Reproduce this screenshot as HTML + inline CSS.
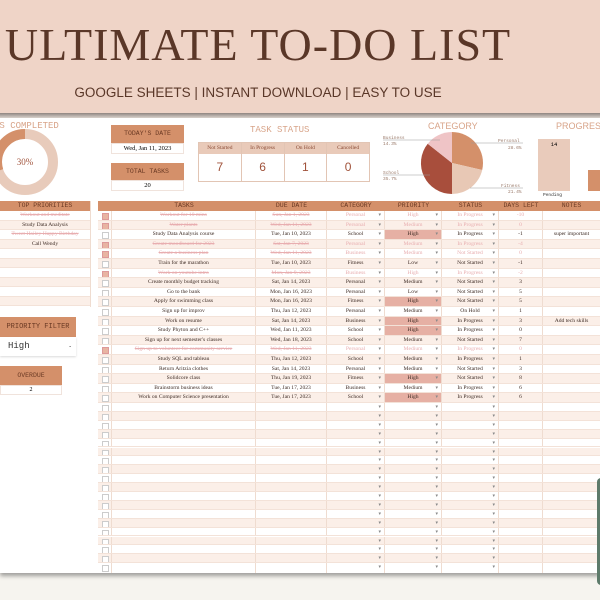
<!DOCTYPE html>
<html><head><meta charset="utf-8"><style>
*{margin:0;padding:0;box-sizing:border-box}
body{width:600px;height:600px;overflow:hidden;background:#f6f4ef;position:relative;font-family:"Liberation Serif",serif}
.hdr{position:absolute;left:0;top:0;width:600px;height:115px;background:#efd4c7}
.title{position:absolute;left:-42px;width:600px;top:17px;text-align:center;font-size:46px;color:#5a3728;letter-spacing:1px;font-family:"Liberation Serif",serif;line-height:56px}
.sub{position:absolute;left:-42px;width:600px;top:85px;text-align:center;font-family:"Liberation Sans",sans-serif;font-size:13.5px;color:#5a3728}
.shadow{position:absolute;left:0;top:113px;width:600px;height:5px;background:linear-gradient(#8f8580,#d9d2cc)}
.sheet{position:absolute;left:0;top:117px;width:600px;height:456px;background:#fff;box-shadow:0 3px 4px rgba(0,0,0,.35)}
.ab{position:absolute}
.mono{font-family:"Liberation Mono",monospace}
.ttl{color:#d8a489;font-size:9px}
.hb{background:#d4906a;color:#6b3a24;font-family:"Liberation Mono",monospace;font-size:6.5px;text-align:center}
.r{position:absolute;left:98px;width:502px;height:9.6px;display:flex;font-size:5.6px;color:#3e2c25;line-height:9px;border-bottom:1px solid #f3e2d8}
.r.e{height:8.9px}
.r.a{background:#fbefe8}
.r span{display:block;height:100%;text-align:center;border-right:1px solid #efdcd0;white-space:nowrap;overflow:hidden;position:relative}
.r span:nth-child(1){width:14px}.r span:nth-child(2){width:144px}.r span:nth-child(3){width:71px}.r span:nth-child(4){width:58px}.r span:nth-child(5){width:57px}.r span:nth-child(6){width:57px}.r span:nth-child(7){width:44px}.r span:nth-child(8){width:57px;border:0}
.r span:nth-child(1)::before{content:"";position:absolute;left:4px;top:2px;width:5px;height:5px;border:1px solid #ccc;background:#fff}
.r.d span:nth-child(1)::before{background:#e8b4a2;border-color:#d99}
.r.d span{color:#e8aeb0;text-decoration:line-through}
.r.d span:nth-child(7),.r.d span:nth-child(4),.r.d span:nth-child(5),.r.d span:nth-child(6){text-decoration:none}
.r span.dd::after{content:"▾";position:absolute;right:3px;top:0;color:#888;font-size:5px;text-decoration:none}
.r span.h{background:#e6b0a4}
.lr{position:absolute;left:0;width:90px;font-size:5.6px;text-align:center;color:#3e2c25;line-height:9.5px;height:9.5px;border-bottom:1px solid #f3e2d8}
.lr.a{background:#fbefe8}
.lr.d{color:#e8aeb0;text-decoration:line-through}
</style></head><body>
<div class="hdr"></div>
<div class="title">ULTIMATE TO-DO LIST</div>
<div class="sub">GOOGLE SHEETS | INSTANT DOWNLOAD | EASY TO USE</div>
<div class="sheet"></div>
<div class="shadow"></div>

<div class="ab mono ttl" style="left:-6px;top:121px">KS COMPLETED</div>
<svg class="ab" style="left:0;top:125px" width="70" height="75">
<circle cx="25" cy="37" r="28" fill="none" stroke="#e8cbbb" stroke-width="10"/>
<circle cx="25" cy="37" r="28" fill="none" stroke="#d4906a" stroke-width="10" stroke-dasharray="52.8 200" transform="rotate(-90 25 37) scale(1 -1) translate(0 -74)"/>
<text x="25" y="40" text-anchor="middle" font-size="9" fill="#a0523a" font-family="Liberation Serif">30%</text>
</svg>

<div class="ab hb" style="left:111px;top:125px;width:73px;height:18px;line-height:18px">TODAY'S DATE</div>
<div class="ab" style="left:111px;top:143px;width:73px;height:11px;font-size:6.5px;text-align:center;line-height:10px;border:1px solid #f0e3dc">Wed, Jan 11, 2023</div>
<div class="ab hb" style="left:111px;top:163px;width:73px;height:17px;line-height:17px">TOTAL TASKS</div>
<div class="ab" style="left:111px;top:180px;width:73px;height:11px;font-size:6.5px;text-align:center;line-height:10px;border:1px solid #f0e3dc">20</div>

<div class="ab mono ttl" style="left:250px;top:125px">TASK STATUS</div>
<div class="ab" style="left:198px;top:142px;width:172px;height:40px;border:1px solid #e2c5b4;display:flex">
<div style="flex:1;border-right:1px solid #e2c5b4;text-align:center"><div style="background:#e9cab9;font-size:5.5px;line-height:11px;color:#8a4a34">Not Started</div><div style="font-family:'Liberation Sans';font-size:12px;color:#a0523a;line-height:27px">7</div></div>
<div style="flex:1;border-right:1px solid #e2c5b4;text-align:center"><div style="background:#e9cab9;font-size:5.5px;line-height:11px;color:#8a4a34">In Progress</div><div style="font-family:'Liberation Sans';font-size:12px;color:#a0523a;line-height:27px">6</div></div>
<div style="flex:1;border-right:1px solid #e2c5b4;text-align:center"><div style="background:#e9cab9;font-size:5.5px;line-height:11px;color:#8a4a34">On Hold</div><div style="font-family:'Liberation Sans';font-size:12px;color:#a0523a;line-height:27px">1</div></div>
<div style="flex:1;text-align:center"><div style="background:#e9cab9;font-size:5.5px;line-height:11px;color:#8a4a34">Cancelled</div><div style="font-family:'Liberation Sans';font-size:12px;color:#a0523a;line-height:27px">0</div></div>
</div>

<div class="ab ttl" style="left:428px;top:121px;font-family:'Liberation Sans';font-size:9px">CATEGORY</div>
<svg class="ab" style="left:370px;top:125px" width="160" height="75" font-family="Liberation Mono" font-size="4.5">
<g transform="translate(-370 -125)">
<path d="M452 163 L452 132 A31 31 0 0 1 482.2 170 Z" fill="#d4906a"/>
<path d="M452 163 L482.2 170 A31 31 0 0 1 452 194 Z" fill="#e8c8b5"/>
<path d="M452 163 L452 194 A31 31 0 0 1 427.7 143.7 Z" fill="#a84e3c"/>
<path d="M452 163 L427.7 143.7 A31 31 0 0 1 452 132 Z" fill="#efc4c6"/>
<g stroke="#999" stroke-width=".5"><line x1="383" y1="140" x2="440" y2="140"/><line x1="383" y1="175" x2="430" y2="175"/><line x1="471" y1="143" x2="523" y2="143"/><line x1="470" y1="188" x2="523" y2="188"/></g>
<g fill="#9a7a6a"><text x="383" y="139">Business</text><text x="383" y="145">14.3%</text><text x="383" y="174">School</text><text x="383" y="180">35.7%</text><text x="498" y="142">Personal</text><text x="508" y="149">28.6%</text><text x="501" y="187">Fitness</text><text x="508" y="193">21.4%</text></g>
</g></svg>

<div class="ab ttl" style="left:556px;top:121px;font-family:'Liberation Sans';font-size:9px">PROGRESS</div>
<div class="ab" style="left:538px;top:139px;width:32px;height:52px;background:#e9cbbb;font-family:'Liberation Mono';font-size:5.5px;text-align:center;padding-top:2px">14</div>
<div class="ab" style="left:588px;top:170px;width:12px;height:21px;background:#d4906a"></div>
<div class="ab" style="left:543px;top:193px;font-family:'Liberation Mono';font-size:4.5px;color:#333">Pending</div>

<div class="ab hb" style="left:0;top:201px;width:90px;height:10px;line-height:10px">TOP PRIORITIES</div>
<div class="lr d" style="top:211px">Workout and meditate</div>
<div class="lr a" style="top:220.5px">Study Data Analysis</div>
<div class="lr d" style="top:230px">Tweet Hailey Happy Birthday</div>
<div class="lr a" style="top:239.5px">Call Wendy</div>
<div class="lr" style="top:249px"></div><div class="lr a" style="top:258.5px"></div><div class="lr" style="top:268px"></div><div class="lr a" style="top:277.5px"></div><div class="lr" style="top:287px"></div><div class="lr a" style="top:296.5px"></div>
<div class="ab" style="left:90px;top:201px;width:1px;height:106px;background:#efdcd0"></div>

<div class="ab hb" style="left:0;top:317px;width:76px;height:20px;line-height:20px;font-size:7px">PRIORITY FILTER</div>
<div class="ab mono" style="left:0;top:337px;width:76px;height:19px;line-height:19px;font-size:9px;color:#333;padding-left:8px;box-shadow:0 1px 2px rgba(0,0,0,.15)">High<span style="position:absolute;right:4px;font-size:6px">-</span></div>
<div class="ab hb" style="left:0;top:366px;width:62px;height:19px;line-height:19px;font-size:6.5px">OVERDUE</div>
<div class="ab" style="left:0;top:385px;width:62px;height:10px;line-height:9px;font-size:6px;text-align:center;border:1px solid #f0e3dc">2</div>

<div class="ab hb" style="left:98px;top:201px;width:502px;height:10px;line-height:10px;display:flex"><span style="width:14px"></span><span style="width:144px">TASKS</span><span style="width:71px">DUE DATE</span><span style="width:58px">CATEGORY</span><span style="width:57px">PRIORITY</span><span style="width:57px">STATUS</span><span style="width:44px">DAYS LEFT</span><span style="width:57px">NOTES</span></div>

<div class="r d" style="top:211px"><span></span><span>Workout for 10 mins</span><span>Sun, Jan 1, 2023</span><span class="dd">Personal</span><span class="dd">High</span><span class="dd">In Progress</span><span>-10</span><span></span></div>
<div class="r d a" style="top:220.6px"><span></span><span>Water plants</span><span>Wed, Jan 11, 2023</span><span class="dd">Personal</span><span class="dd">Medium</span><span class="dd">In Progress</span><span>0</span><span></span></div>
<div class="r" style="top:230.2px"><span></span><span>Study Data Analysis course</span><span>Tue, Jan 10, 2023</span><span class="dd">School</span><span class="dd h">High</span><span class="dd">In Progress</span><span>-1</span><span>super important</span></div>
<div class="r d a" style="top:239.8px"><span></span><span>Create moodboard for 2023</span><span>Sat, Jan 7, 2023</span><span class="dd">Personal</span><span class="dd">Medium</span><span class="dd">In Progress</span><span>-4</span><span></span></div>
<div class="r d" style="top:249.4px"><span></span><span>Create a business plan</span><span>Wed, Jan 11, 2023</span><span class="dd">Business</span><span class="dd">Medium</span><span class="dd">Not Started</span><span>0</span><span></span></div>
<div class="r a" style="top:259px"><span></span><span>Train for the marathon</span><span>Tue, Jan 10, 2023</span><span class="dd">Fitness</span><span class="dd">Low</span><span class="dd">Not Started</span><span>-1</span><span></span></div>
<div class="r d" style="top:268.6px"><span></span><span>Work on youtube intro</span><span>Mon, Jan 9, 2023</span><span class="dd">Business</span><span class="dd">High</span><span class="dd">In Progress</span><span>-2</span><span></span></div>
<div class="r a" style="top:278.2px"><span></span><span>Create monthly budget tracking</span><span>Sat, Jan 14, 2023</span><span class="dd">Personal</span><span class="dd">Medium</span><span class="dd">Not Started</span><span>3</span><span></span></div>
<div class="r" style="top:287.8px"><span></span><span>Go to the bank</span><span>Mon, Jan 16, 2023</span><span class="dd">Personal</span><span class="dd">Low</span><span class="dd">Not Started</span><span>5</span><span></span></div>
<div class="r a" style="top:297.4px"><span></span><span>Apply for swimming class</span><span>Mon, Jan 16, 2023</span><span class="dd">Fitness</span><span class="dd h">High</span><span class="dd">Not Started</span><span>5</span><span></span></div>
<div class="r" style="top:307px"><span></span><span>Sign up for improv</span><span>Thu, Jan 12, 2023</span><span class="dd">Personal</span><span class="dd">Medium</span><span class="dd">On Hold</span><span>1</span><span></span></div>
<div class="r a" style="top:316.6px"><span></span><span>Work on resume</span><span>Sat, Jan 14, 2023</span><span class="dd">Business</span><span class="dd h">High</span><span class="dd">In Progress</span><span>3</span><span>Add tech skills</span></div>
<div class="r" style="top:326.2px"><span></span><span>Study Phyton and C++</span><span>Wed, Jan 11, 2023</span><span class="dd">School</span><span class="dd h">High</span><span class="dd">In Progress</span><span>0</span><span></span></div>
<div class="r a" style="top:335.8px"><span></span><span>Sign up for next semester's classes</span><span>Wed, Jan 18, 2023</span><span class="dd">School</span><span class="dd">Medium</span><span class="dd">Not Started</span><span>7</span><span></span></div>
<div class="r d" style="top:345.4px"><span></span><span>Sign up to volunteer for community service</span><span>Wed, Jan 11, 2023</span><span class="dd">Personal</span><span class="dd">Medium</span><span class="dd">In Progress</span><span>0</span><span></span></div>
<div class="r a" style="top:355px"><span></span><span>Study SQL and tableau</span><span>Thu, Jan 12, 2023</span><span class="dd">School</span><span class="dd">Medium</span><span class="dd">In Progress</span><span>1</span><span></span></div>
<div class="r" style="top:364.6px"><span></span><span>Return Aritzia clothes</span><span>Sat, Jan 14, 2023</span><span class="dd">Personal</span><span class="dd">Medium</span><span class="dd">Not Started</span><span>3</span><span></span></div>
<div class="r a" style="top:374.2px"><span></span><span>Solidcore class</span><span>Thu, Jan 19, 2023</span><span class="dd">Fitness</span><span class="dd h">High</span><span class="dd">Not Started</span><span>8</span><span></span></div>
<div class="r" style="top:383.8px"><span></span><span>Brainstorm business ideas</span><span>Tue, Jan 17, 2023</span><span class="dd">Business</span><span class="dd">Medium</span><span class="dd">In Progress</span><span>6</span><span></span></div>
<div class="r a" style="top:393.4px"><span></span><span>Work on Computer Science presentation</span><span>Tue, Jan 17, 2023</span><span class="dd">School</span><span class="dd h">High</span><span class="dd">In Progress</span><span>6</span><span></span></div>
<div class="r e" style="top:403px"><span></span><span></span><span></span><span class="dd"></span><span class="dd"></span><span class="dd"></span><span></span><span></span></div>
<div class="r e a" style="top:411.9px"><span></span><span></span><span></span><span class="dd"></span><span class="dd"></span><span class="dd"></span><span></span><span></span></div>
<div class="r e" style="top:420.8px"><span></span><span></span><span></span><span class="dd"></span><span class="dd"></span><span class="dd"></span><span></span><span></span></div>
<div class="r e a" style="top:429.7px"><span></span><span></span><span></span><span class="dd"></span><span class="dd"></span><span class="dd"></span><span></span><span></span></div>
<div class="r e" style="top:438.6px"><span></span><span></span><span></span><span class="dd"></span><span class="dd"></span><span class="dd"></span><span></span><span></span></div>
<div class="r e a" style="top:447.5px"><span></span><span></span><span></span><span class="dd"></span><span class="dd"></span><span class="dd"></span><span></span><span></span></div>
<div class="r e" style="top:456.4px"><span></span><span></span><span></span><span class="dd"></span><span class="dd"></span><span class="dd"></span><span></span><span></span></div>
<div class="r e a" style="top:465.3px"><span></span><span></span><span></span><span class="dd"></span><span class="dd"></span><span class="dd"></span><span></span><span></span></div>
<div class="r e" style="top:474.2px"><span></span><span></span><span></span><span class="dd"></span><span class="dd"></span><span class="dd"></span><span></span><span></span></div>
<div class="r e a" style="top:483.1px"><span></span><span></span><span></span><span class="dd"></span><span class="dd"></span><span class="dd"></span><span></span><span></span></div>
<div class="r e" style="top:492px"><span></span><span></span><span></span><span class="dd"></span><span class="dd"></span><span class="dd"></span><span></span><span></span></div>
<div class="r e a" style="top:500.9px"><span></span><span></span><span></span><span class="dd"></span><span class="dd"></span><span class="dd"></span><span></span><span></span></div>
<div class="r e" style="top:509.8px"><span></span><span></span><span></span><span class="dd"></span><span class="dd"></span><span class="dd"></span><span></span><span></span></div>
<div class="r e a" style="top:518.7px"><span></span><span></span><span></span><span class="dd"></span><span class="dd"></span><span class="dd"></span><span></span><span></span></div>
<div class="r e" style="top:527.6px"><span></span><span></span><span></span><span class="dd"></span><span class="dd"></span><span class="dd"></span><span></span><span></span></div>
<div class="r e a" style="top:536.5px"><span></span><span></span><span></span><span class="dd"></span><span class="dd"></span><span class="dd"></span><span></span><span></span></div>
<div class="r e" style="top:545.4px"><span></span><span></span><span></span><span class="dd"></span><span class="dd"></span><span class="dd"></span><span></span><span></span></div>
<div class="r e a" style="top:554.3px"><span></span><span></span><span></span><span class="dd"></span><span class="dd"></span><span class="dd"></span><span></span><span></span></div>
<div class="r e" style="top:563.2px;height:9.8px;border:0"><span></span><span></span><span></span><span class="dd"></span><span class="dd"></span><span class="dd"></span><span></span><span></span></div>

<div class="ab" style="left:597px;top:478px;width:10px;height:107px;background:#5d7a6a;border-radius:4px"></div>
</body></html>
